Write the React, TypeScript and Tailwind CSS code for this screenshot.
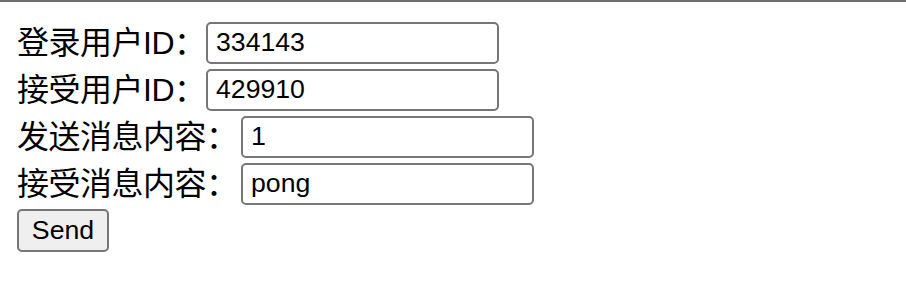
import React, { useState } from "react";

const labelFont = {
  fontFamily: '"Liberation Sans", "Noto Sans CJK SC", sans-serif',
};

function Row({
  label,
  value,
  onChange,
  labelWidth,
}: {
  label: string;
  value: string;
  onChange: (v: string) => void;
  labelWidth: string;
}) {
  return (
    <div className="flex h-[47px] items-center">
      <label
        className={`${labelWidth} shrink-0 text-[32px] leading-none tracking-[-0.5px] text-black whitespace-nowrap`}
      >
        {label}
      </label>
      <input
        type="text"
        value={value}
        onChange={(e) => onChange(e.target.value)}
        className="h-[42px] w-[293px] rounded-[5px] border-2 border-[#767676] bg-white pl-[8px] text-[26.67px] text-black outline-none"
      />
    </div>
  );
}

export default function App() {
  const [userId, setUserId] = useState("334143");
  const [toId, setToId] = useState("429910");
  const [msg, setMsg] = useState("1");
  const [reply, setReply] = useState("pong");

  return (
    <div
      className="h-[302px] w-full border-t-2 border-[#6f6f6f] bg-white pl-[17px] pt-[17px]"
      style={labelFont}
    >
      <Row label="登录用户ID：" labelWidth="w-[189px]" value={userId} onChange={setUserId} />
      <Row label="接受用户ID：" labelWidth="w-[189px]" value={toId} onChange={setToId} />
      <Row label="发送消息内容：" labelWidth="w-[224px]" value={msg} onChange={setMsg} />
      <Row label="接受消息内容：" labelWidth="w-[224px]" value={reply} onChange={setReply} />
      <div className="flex h-[47px] items-center">
        <button className="h-[43px] w-[92px] rounded-[5px] border-2 border-[#767676] bg-[#efefef] text-[26.67px] leading-none text-black">
          Send
        </button>
      </div>
    </div>
  );
}
